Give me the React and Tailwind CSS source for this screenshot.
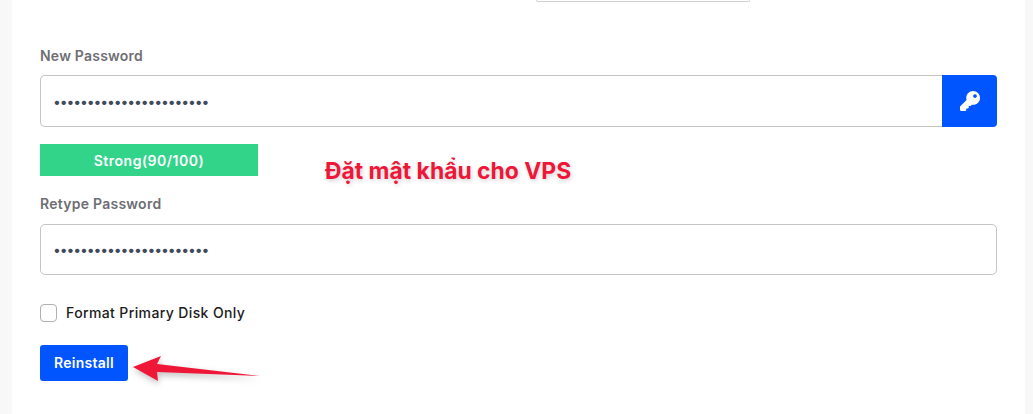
import React from "react";
import { FaKey } from "react-icons/fa";

const DOTS = "•".repeat(23);

function PasswordBox({ height, right }) {
  return (
    <div className={`flex ${height} bg-white`}>
      <div
        className={`flex-1 flex items-center pl-[12px] border border-[#c4c4c4] ${right ? "rounded-l-[5px] border-r-0" : "rounded-[5px]"} text-[#3f4a5a] text-[14px] tracking-[-1.12px] font-['Inter',sans-serif]`}
      >
        {DOTS}
      </div>
      {right}
    </div>
  );
}

export default function App() {
  return (
    <div className="relative w-[1033px] h-[414px] overflow-hidden bg-[#f8f8f8] font-['Inter',sans-serif]">
      <div className="ml-3 w-[1013px] h-[414px] bg-white pl-7 pr-7">
        <div className="ml-[496px] w-[214px] h-[2px] bg-white border-b border-x border-[#d0d0d0] rounded-b-[4px]" />
        <label className="block mt-[46px] h-[16px] leading-[16px] text-[14px] font-semibold tracking-[0.22px] text-[#6e6e73]">
          New Password
        </label>
        <div className="mt-[11px]">
          <PasswordBox
            height="h-[52px]"
            right={
              <button className="w-[55px] flex items-center justify-center bg-[#0055ff] rounded-r-[4px] text-white">
                <FaKey className="w-5 h-5" />
              </button>
            }
          />
        </div>
        <div className="mt-[17px] w-[218px] h-8 flex items-center justify-center bg-[#31d489] text-white text-[14px] font-semibold tracking-[0.5px]">
          Strong(90/100)
        </div>
        <label className="block mt-5 h-[16px] leading-[16px] text-[14px] font-semibold tracking-[0.25px] text-[#6e6e73]">
          Retype Password
        </label>
        <div className="mt-[12px]">
          <PasswordBox height="h-[51px]" />
        </div>
        <div className="mt-[29px] flex items-center gap-[9px] h-[18px]">
          <span className="w-[17px] h-[18px] bg-white border border-[#b0b0b0] rounded-[4px]" />
          <span className="text-[14px] font-medium text-[#1a1c20] tracking-[0.38px] pb-[2px]">Format Primary Disk Only</span>
        </div>
        <button className="mt-[23px] block w-[88px] h-9 bg-[#0055ff] rounded-[3px] text-white text-[14px] font-semibold tracking-[0.25px] pb-[2px]">
          Reinstall
        </button>
      </div>

      <div className="absolute left-[325px] top-[157px] text-[22.9px] leading-[28px] font-bold text-[#ef1738] [text-shadow:1px_2px_4px_rgba(0,0,0,0.18)]">
        Đặt mật khẩu cho VPS
      </div>

      <svg className="absolute left-[130px] top-[352px]" width="134" height="32" viewBox="0 0 134 32" style={{ filter: "drop-shadow(1px 3px 3px rgba(0,0,0,0.25))" }}>
        <path d="M3 15 L31 4 L27 12 L130 24 L27 20 L28 29 Z" fill="#ef1738" />
      </svg>
    </div>
  );
}
